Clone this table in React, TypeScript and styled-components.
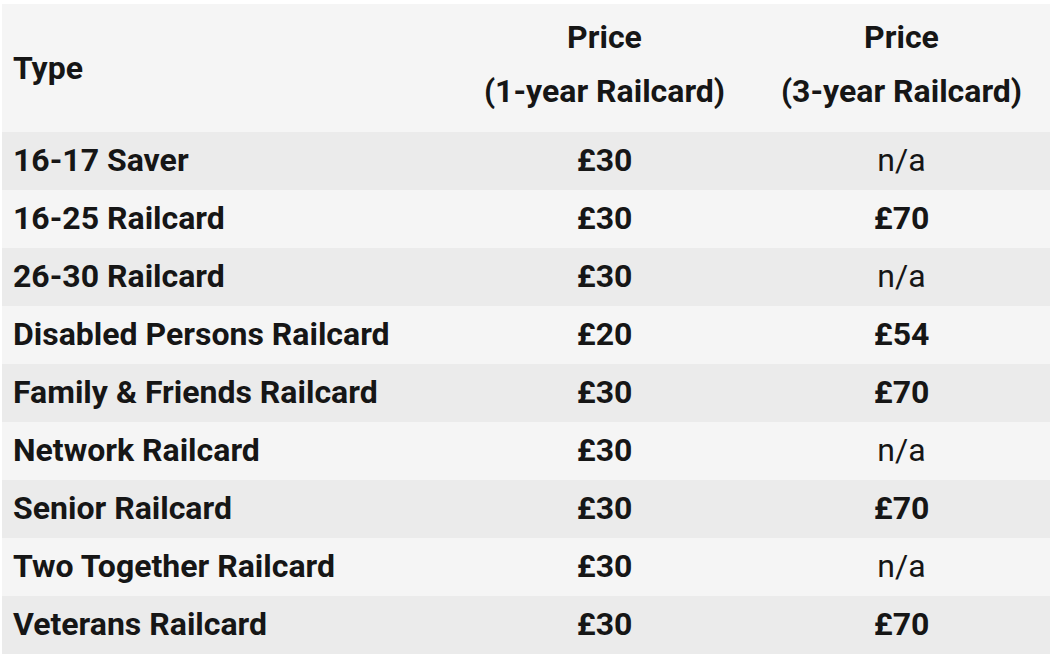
import React from 'react'
import styled, { createGlobalStyle } from 'styled-components'

const GlobalStyle = createGlobalStyle`
  html, body {
    margin: 0;
    padding: 0;
    background: #ffffff;
  }
  body {
    font-family: Roboto, 'Liberation Sans', Arial, sans-serif;
  }
`

const Wrapper = styled.div`
  padding: 4px 0 2px 2px;
`

const Table = styled.table`
  width: 1048px;
  border-collapse: collapse;
  table-layout: fixed;
  color: #161616;
  font-size: 32px;
  font-weight: 700;
`

const HeadRow = styled.tr`
  background: #f5f5f5;
  height: 128px;
`

const HeadCell = styled.th<{ $align?: 'left' | 'center' }>`
  text-align: ${(p) => p.$align || 'center'};
  padding: ${(p) => (p.$align === 'left' ? '10px 11px' : '6px 11px 14px')};
  line-height: 54px;
  font-weight: 700;
  vertical-align: middle;
  white-space: nowrap;
`

const Row = styled.tr<{ $shaded: boolean }>`
  background: ${(p) => (p.$shaded ? '#ebebeb' : '#f5f5f5')};
  height: 58px;
`

const Cell = styled.td<{ $align?: 'left' | 'center'; $light?: boolean }>`
  text-align: ${(p) => p.$align || 'center'};
  padding: 0 11px 2px;
  line-height: 56px;
  font-weight: ${(p) => (p.$light ? 400 : 700)};
  white-space: nowrap;
`

type Card = { name: string; one: string; three: string }

const cards: Card[] = [
  { name: '16-17 Saver', one: '£30', three: 'n/a' },
  { name: '16-25 Railcard', one: '£30', three: '£70' },
  { name: '26-30 Railcard', one: '£30', three: 'n/a' },
  { name: 'Disabled Persons Railcard', one: '£20', three: '£54' },
  { name: 'Family & Friends Railcard', one: '£30', three: '£70' },
  { name: 'Network Railcard', one: '£30', three: 'n/a' },
  { name: 'Senior Railcard', one: '£30', three: '£70' },
  { name: 'Two Together Railcard', one: '£30', three: 'n/a' },
  { name: 'Veterans Railcard', one: '£30', three: '£70' },
]

const App = () => {
  return (
    <Wrapper>
      <GlobalStyle />
      <Table>
        <colgroup>
          <col style={{ width: 454 }} />
          <col style={{ width: 297 }} />
          <col style={{ width: 297 }} />
        </colgroup>
        <thead>
          <HeadRow>
            <HeadCell $align="left">Type</HeadCell>
            <HeadCell>
              Price
              <br />
              (1-year Railcard)
            </HeadCell>
            <HeadCell>
              Price
              <br />
              (3-year Railcard)
            </HeadCell>
          </HeadRow>
        </thead>
        <tbody>
          {cards.map((c, i) => (
            <Row key={c.name} $shaded={i % 2 === 0}>
              <Cell $align="left">{c.name}</Cell>
              <Cell $light={c.one === 'n/a'}>{c.one}</Cell>
              <Cell $light={c.three === 'n/a'}>{c.three}</Cell>
            </Row>
          ))}
        </tbody>
      </Table>
    </Wrapper>
  )
}

export default App
